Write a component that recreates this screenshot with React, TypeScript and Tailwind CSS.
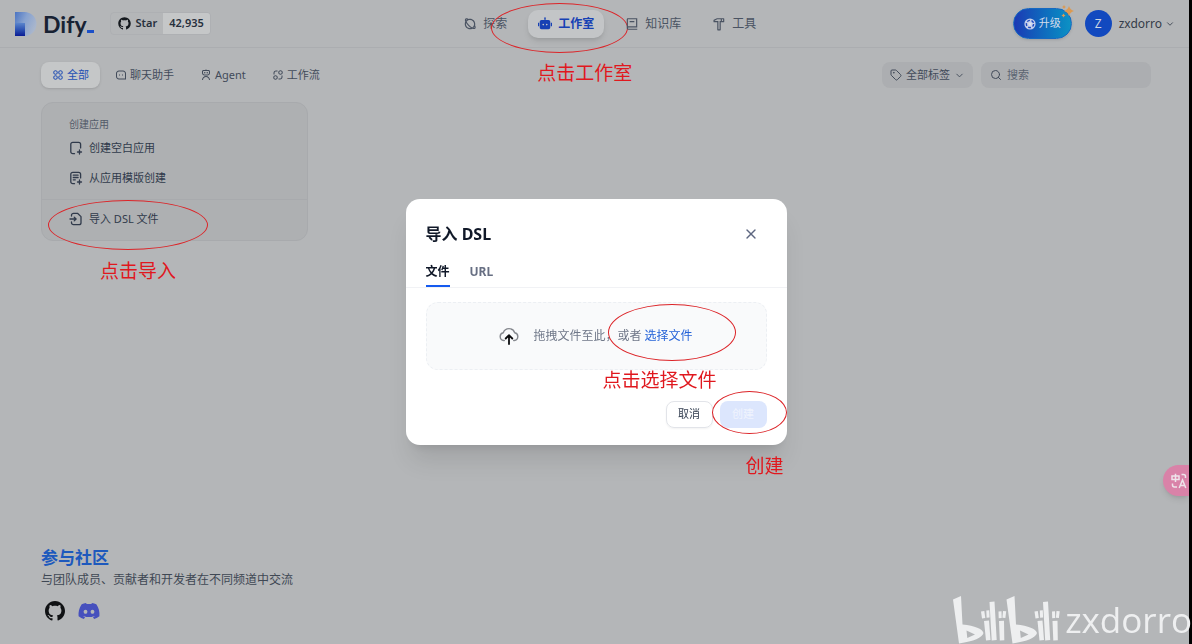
import type { ReactNode } from "react";
import { ChevronDown, Search, Tag, X } from "lucide-react";
import {
    RiApps2Line,
    RiBook2Line,
    RiDiscordFill,
    RiExchange2Line,
    RiGithubFill,
    RiHammerLine,
    RiMessage3Line,
    RiPlanetLine,
    RiRobot2Fill,
    RiRobot3Line,
} from "react-icons/ri";

const navItems = [
    { label: "探索", icon: RiPlanetLine },
    { label: "工作室", icon: RiRobot2Fill, active: true },
    { label: "知识库", icon: RiBook2Line },
    { label: "工具", icon: RiHammerLine },
];

const filters = [
    { label: "全部", icon: RiApps2Line, active: true },
    { label: "聊天助手", icon: RiMessage3Line },
    { label: "Agent", icon: RiRobot3Line },
    { label: "工作流", icon: RiExchange2Line },
];

function Ring({ className }: { className: string }) {
    return <span className={`pointer-events-none absolute rounded-[50%] border border-[#dc2428] ${className}`} />;
}

function Note({ className, children }: { className: string; children: ReactNode }) {
    return (
        <span className={`pointer-events-none absolute whitespace-nowrap text-[19px] leading-6 font-normal text-[#e0181e] ${className}`}>
            {children}
        </span>
    );
}

function DifyLogo() {
    return (
        <svg width="22" height="24" viewBox="0 0 22 24" aria-hidden="true">
            <defs>
                <linearGradient id="stem" x1="0" y1="0" x2="0" y2="1">
                    <stop offset="0" stopColor="#5c86cc" />
                    <stop offset="0.5" stopColor="#2f55b4" />
                    <stop offset="1" stopColor="#0a1c94" />
                </linearGradient>
                <linearGradient id="bowl" x1="0" y1="0" x2="1" y2="0.5">
                    <stop offset="0" stopColor="#4b74c2" />
                    <stop offset="0.5" stopColor="#87a2d0" />
                    <stop offset="1" stopColor="#a9b6cc" />
                </linearGradient>
            </defs>
            <path d="M0 0h9.500a12 12 0 0 1 0 24H10V11H0z" fill="url(#bowl)" />
            <path d="M0 10.800 10 11v13H0z" fill="url(#stem)" />
        </svg>
    );
}

function FilePlusIcon({ lines = false }: { lines?: boolean }) {
    return (
        <svg width="14" height="14" viewBox="0 0 14 14" fill="none" stroke="currentColor" strokeWidth="1.3" strokeLinecap="round" strokeLinejoin="round" aria-hidden="true">
            <path d="M5.500 12.700H3.800a2 2 0 0 1-2-2V3.300a2 2 0 0 1 2-2h5.800a2 2 0 0 1 2 2v3.600" />
            <path d="M10.500 9v4M8.500 11h4" />
            {lines && <path d="M4.300 4.200h4.800M4.300 6.500h4.800M4.300 8.800h2" />}
        </svg>
    );
}

function FileImportIcon() {
    return (
        <svg width="14" height="14" viewBox="0 0 14 14" fill="none" stroke="currentColor" strokeWidth="1.3" strokeLinecap="round" strokeLinejoin="round" aria-hidden="true">
            <path d="M2.500 4V3.300a2 2 0 0 1 2-2h4L12 4.600v6.100a2 2 0 0 1-2 2H4.500a2 2 0 0 1-2-2V10" />
            <path d="M1 7h6M5.200 5.100 7.100 7 5.200 8.900" />
        </svg>
    );
}

function UploadIcon() {
    return (
        <svg width="20" height="20" viewBox="0 0 20 20" fill="none" strokeLinecap="round" strokeLinejoin="round" aria-hidden="true">
            <path d="M5.300 14.500H4.700A3.900 3.900 0 0 1 4.300 6.800 6 6 0 0 1 15.700 6.800a3.900 3.900 0 0 1-.4 7.700h-.6" stroke="#85888e" strokeWidth="1.400" />
            <path d="M10 18V9.500M6.700 12.500 10 9.200l3.300 3.300" stroke="#0b0c0e" strokeWidth="1.800" />
        </svg>
    );
}

function UpgradeBadge() {
    return (
        <svg width="12" height="12" viewBox="0 0 12 12" aria-hidden="true">
            <circle cx="6" cy="6" r="5.600" fill="#c3cdea" />
            <circle cx="6" cy="6" r="3.600" fill="none" stroke="#1c47c0" strokeWidth="1.400" strokeDasharray="2.800 1.720" />
            <path d="M6 3.800l.7 1.400 1.500.2-1.100 1.100.3 1.500L6 7.300 4.600 8l.3-1.500-1.100-1.100 1.500-.2z" fill="#dfe5f3" />
        </svg>
    );
}

function Sparkles() {
    return (
        <svg className="absolute -top-[4px] -right-[3px]" width="13" height="13" viewBox="0 0 13 13" fill="#dc9a52" aria-hidden="true">
            <path d="M8 1q1.200 3.800 5 5-3.800 1.200-5 5-1.200-3.800-5-5 3.800-1.200 5-5z" />
            <path d="M3 0q.5 1.500 2 2-1.500.5-2 2-.5-1.500-2-2 1.500-.5 2-2zM2.500 8.500q.5 1.500 2 2-1.500.5-2 2-.5-1.500-2-2 1.500-.5 2-2z" />
        </svg>
    );
}

function TranslateIcon() {
    return (
        <svg width="16" height="16" viewBox="0 0 16 16" fill="none" stroke="#eee4ea" strokeWidth="1.500" aria-hidden="true">
            <path d="M1 3h7v3.500H1zM4.500 .8v8.200" />
            <path d="M8.200 15l3.300-8 3.300 8M9.400 12.500h4.200" />
            <path d="M10.500 1.500h2a2 2 0 0 1 2 2V5M1.500 10.500V12a2 2 0 0 0 2 2h2.500" />
        </svg>
    );
}

function BilibiliLogo() {
    return (
        <svg width="108" height="48" viewBox="0 0 108 48" fill="#eeeff0" aria-hidden="true">
            <g id="half">
                <path fillRule="evenodd" d="M0 3.500 8 0 9.500 28.500q19 2 21 8.500-2 7-24.500 10.500zM13.500 34.500l.8 7.500 7.700-3.500z" />
                <path d="M28 15.500l3.300-.5 1 7-3.300.5zM33.300 14.500l3-.2.3 7.200-3 .2zM31 25l5-.5 1.500 19.500-4.500.5zM36.500 6l5-.6 2.200 38.600-5 .5zM45.500 15.500l3-.2.2 6.700-3 .2zM50 15l3.200.2-.8 6.800-3-.2zM46 25l5-.2.3 19.400-4.500.2z" />
            </g>
            <use href="#half" x="53.500" />
        </svg>
    );
}

function Header() {
    return (
        <header className="flex h-12 items-center justify-between border-b border-[#abadb0] pr-[14px] pl-[15px]">
            <div className="flex items-center">
                <a href="#" aria-label="Dify" className="flex items-center gap-[6px]">
                    <DifyLogo />
                    <span className="flex items-baseline font-[Lato] text-[23px] leading-6 font-bold text-[#182233]">
                        Dify
                        <span className="h-[3px] w-[7px] bg-[#1c50c8]" />
                    </span>
                </a>
                <a href="#" className="ml-4 flex h-[23px] items-center overflow-hidden rounded border border-[#aeb0b3] text-[11px] font-semibold text-[#27303d]">
                    <span className="flex items-center gap-1 px-[6px]">
                        <RiGithubFill size={15} className="text-[#14181d]" />
                        Star
                    </span>
                    <span className="flex h-full items-center bg-[#c5c7c8] px-[6px]">42,935</span>
                </a>
            </div>

            <nav className="flex items-center gap-[11px] text-xs">
                {navItems.map(({ label, icon: Icon, active }) => (
                    <div key={label} className="relative">
                        <a
                            href="#"
                            className={`flex h-7 items-center gap-[6px] rounded-[10px] px-[10px] ${
                                active ? "bg-[#c3c5c7] font-bold text-[#1741b4] shadow-md" : "text-[#4a5362]"
                            }`}
                        >
                            <Icon size={14} />
                            {label}
                        </a>
                        {active && <Ring className="-top-[7px] -left-[37px] h-[50px] w-[137px]" />}
                        {active && <Note className="top-[51px] left-[9px]">点击工作室</Note>}
                    </div>
                ))}
            </nav>

            <div className="flex items-center pl-1">
                <button className="relative flex h-[31px] items-center gap-[3px] rounded-full border border-[#1769c0] bg-linear-to-r from-[#1c38b4] to-[#0d92c4] px-[10px] text-[11px] text-[#d3dcec] shadow-sm">
                    <UpgradeBadge />
                    升级
                    <Sparkles />
                </button>
                <button className="ml-[13px] flex items-center gap-[7px] text-xs text-[#343c49]">
                    <span className="flex size-[27px] items-center justify-center rounded-full bg-[#1249bf] text-[#d0d6e2]">Z</span>
                    <span className="flex items-center gap-[3px]">
                        zxdorro
                        <ChevronDown size={10} />
                    </span>
                </button>
            </div>
        </header>
    );
}

function Toolbar() {
    return (
        <div className="flex items-center justify-between text-[11px] text-[#424b5a]">
            <div className="flex gap-1">
                {filters.map(({ label, icon: Icon, active }) => (
                    <button
                        key={label}
                        className={`flex h-[26px] items-center gap-[3px] rounded-lg px-[11px] ${
                            active ? "bg-[#c5c7c8] text-[#2450b4] shadow-sm" : ""
                        }`}
                    >
                        <Icon size={12} />
                        {label}
                    </button>
                ))}
            </div>
            <div className="flex gap-2">
                <button className="flex h-[26px] items-center gap-1 rounded-lg bg-[#acaeb1] px-2">
                    <Tag size={12} />
                    全部标签
                    <ChevronDown size={11} />
                </button>
                <label className="flex h-[26px] w-[170px] items-center gap-[5px] rounded-lg bg-[#acaeb1] px-[9px]">
                    <Search size={12} className="shrink-0" />
                    <input type="text" aria-label="搜索" placeholder="搜索" className="w-full min-w-0 bg-transparent outline-none placeholder:text-[#5b6471]" />
                </label>
            </div>
        </div>
    );
}

function CreateCard() {
    return (
        <section className="rounded-xl border border-[#a8aaad] bg-[#aeb0b2] text-[11px] text-[#303a4b]">
            <div className="px-[27px] pt-[13px] pb-[6px]">
                <h2 className="pb-px text-[10px] leading-4 text-[#525b69]">创建应用</h2>
                <button className="flex h-[30px] items-center gap-[6px]">
                    <FilePlusIcon />
                    创建空白应用
                </button>
                <button className="flex h-[30px] items-center gap-[6px]">
                    <FilePlusIcon lines />
                    从应用模版创建
                </button>
            </div>
            <div className="relative border-t border-[#a8aaad] px-[27px] pt-1 pb-[6px]">
                <button className="flex h-[30px] items-center gap-[6px]">
                    <FileImportIcon />
                    导入 DSL 文件
                </button>
                <Ring className="top-0 left-[6px] h-[50px] w-[160px]" />
                <Note className="top-[59px] left-[58px]">点击导入</Note>
            </div>
        </section>
    );
}

function ImportDialog() {
    return (
        <div className="fixed inset-0 flex items-center justify-center">
            <div role="dialog" aria-labelledby="import-title" className="w-[381px] rounded-[14px] bg-white pb-[17px] shadow-xl">
                <div className="flex items-center justify-between px-5 pt-[23px]">
                    <h1 id="import-title" className="text-base leading-6 font-bold text-[#101828]">
                        导入 DSL
                    </h1>
                    <button aria-label="关闭" className="mr-2 text-[#5d6680]">
                        <X size={16} strokeWidth={2} />
                    </button>
                </div>
                <div role="tablist" className="mt-[13px] flex gap-5 border-b border-[#f1f2f5] px-5 text-xs font-bold">
                    <button role="tab" aria-selected="true" className="h-7 border-b-2 border-[#155aef] text-[#101828]">
                        文件
                    </button>
                    <button role="tab" aria-selected="false" className="h-7 border-b-2 border-transparent text-[#676f83]">
                        URL
                    </button>
                </div>
                <div className="mx-5 mt-[14px] flex h-[68px] items-center justify-center gap-[14px] rounded-xl border border-dashed border-[#eceff3] bg-[#f9fafb] text-xs text-[#707889]">
                    <UploadIcon />
                    <div className="relative flex gap-[3px]">
                        <span>拖拽文件至此，或者</span>
                        <button className="text-[#2563d8]">选择文件</button>
                        <Ring className="-top-[24px] right-[-43px] h-[57px] w-[128px]" />
                        <Note className="top-[40px] right-[-24px]">点击选择文件</Note>
                    </div>
                </div>
                <div className="mt-[31px] flex justify-end gap-[7px] px-5 text-[11px]">
                    <button className="h-[27px] w-[47px] rounded-lg border border-[#e2e4e9] text-[#354052] shadow-xs">取消</button>
                    <div className="relative">
                        <button disabled className="h-[27px] w-[47px] rounded-lg bg-[#dce6fd] text-[#f0f4fe]">
                            创建
                        </button>
                        <Ring className="-top-[10px] -left-[8px] h-[43px] w-[75px]" />
                        <Note className="top-[53px] left-[26px]">创建</Note>
                    </div>
                </div>
            </div>
        </div>
    );
}

export default function App() {
    return (
        <div className="min-h-screen bg-black pr-[3px] font-['Noto_Sans','Noto_Sans_CJK_SC',sans-serif]">
            <div className="flex min-h-screen flex-col bg-[#b4b6b8]">
                <Header />
                <main className="flex grow flex-col pt-[14px] pr-[38px] pl-[41px]">
                    <Toolbar />
                    <div className="mt-[14px] grid grid-cols-4 gap-[14px]">
                        <CreateCard />
                    </div>
                    <footer className="mt-auto pb-[21px]">
                        <h2 className="text-[17px] leading-6 font-bold text-[#1d59bd]">参与社区</h2>
                        <p className="text-xs leading-5 text-[#3f4854]">与团队成员、贡献者和开发者在不同频道中交流</p>
                        <div className="mt-[9px] flex gap-[10px] pl-[2px]">
                            <a href="#" aria-label="GitHub" className="text-[#101214]">
                                <RiGithubFill size={24} />
                            </a>
                            <a href="#" aria-label="Discord" className="text-[#4650bd]">
                                <RiDiscordFill size={24} />
                            </a>
                        </div>
                    </footer>
                </main>
            </div>

            <button aria-label="翻译" className="fixed right-[3px] bottom-[148px] flex h-[31px] w-[26px] items-center rounded-l-full bg-[#d982a8] pl-2 shadow-md">
                <TranslateIcon />
            </button>

            <ImportDialog />

            {/* watermark */}
            <div className="pointer-events-none fixed right-0 bottom-0 flex items-center gap-1 text-[#eeeff0]">
                <BilibiliLogo />
                <span className="font-['Open_Sans'] text-[35px] leading-[48px]">zxdorro</span>
            </div>
        </div>
    );
}
